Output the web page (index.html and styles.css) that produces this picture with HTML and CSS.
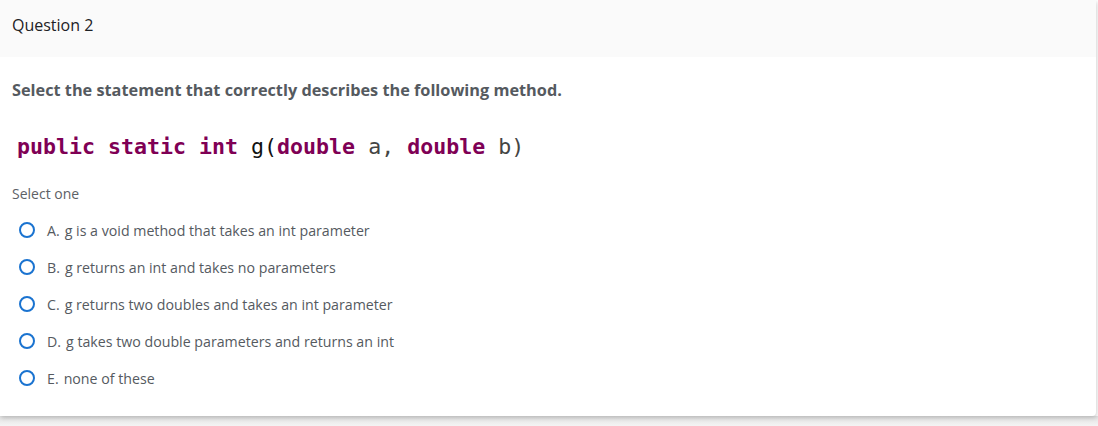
FILE: index.html
```html
<!DOCTYPE html>
<html>
<head>
<meta charset="utf-8">
<link rel="stylesheet" href="styles.css">
</head>
<body>
<div class="card">
  <div class="header">Question 2</div>
  <div class="content">
    <p class="qtext">Select the statement that correctly describes the following method.</p>
    <div class="code"><span class="kw">public</span> <span class="kw">static</span> <span class="kw">int</span> <span class="fn">g(</span><span class="kw">double</span> <span class="var">a,</span> <span class="kw">double</span> <span class="var">b)</span></div>
    <div class="prompt">Select one</div>
    <div class="options">
      <label class="opt"><span class="radio"></span><span class="letter">A.</span><span>g is a void method that takes an int parameter</span></label>
      <label class="opt"><span class="radio"></span><span class="letter">B.</span><span>g returns an int and takes no parameters</span></label>
      <label class="opt"><span class="radio"></span><span class="letter">C.</span><span>g returns two doubles and takes an int parameter</span></label>
      <label class="opt"><span class="radio"></span><span class="letter">D.</span><span>g takes two double parameters and returns an int</span></label>
      <label class="opt"><span class="radio"></span><span class="letter">E.</span><span>none of these</span></label>
    </div>
  </div>
</div>
</body>
</html>
```
FILE: styles.css
```css
html, body {
  margin: 0;
  padding: 0;
  font-family: "Open Sans", "Liberation Sans", sans-serif;
}
body {
  height: 426px;
  overflow: hidden;
  background: linear-gradient(#e2e2e2, #f4f4f4 10px) 0 416px / 100% 10px no-repeat, #ffffff;
}
.card {
  width: 1096px;
  height: 416px;
  background: #fff;
  border-bottom-right-radius: 4px;
  box-shadow: 1px 2px 4px rgba(0,0,0,0.18);
  overflow: hidden;
}
.header {
  height: 57px;
  background: #fafafa;
  padding-left: 12px;
  box-sizing: border-box;
  padding-top: 14px;
  font-size: 16px;
  color: #1d2125;
  line-height: 22px;
}
.content {
  padding: 0 12px;
}
.qtext {
  margin: 22px 0 0 0;
  font-size: 16.3px;
  font-weight: 700;
  color: #555a5f;
  line-height: 22px;
}
.code {
  margin-top: 33px;
  padding-left: 5px;
  font-family: "DejaVu Sans Mono", "Liberation Mono", monospace;
  font-size: 21.6px;
  line-height: 26px;
  white-space: pre;
}
.kw { color: #7f0055; font-weight: 700; }
.fn { color: #111; }
.var { color: #444; }
.prompt {
  margin-top: 24px;
  font-size: 14px;
  color: #5d6166;
  line-height: 20px;
}
.options {
  margin-top: 16px;
  display: flex;
  flex-direction: column;
  gap: 17px;
}
.opt {
  display: flex;
  align-items: center;
  height: 20px;
  font-size: 14.2px;
  color: #555a5f;
  padding-left: 7px;
}
.radio {
  width: 12px;
  height: 12px;
  border: 2px solid #1a73d0;
  border-radius: 50%;
  margin-right: 12px;
  flex: none;
}
.letter {
  margin-right: 5px;
}
```
